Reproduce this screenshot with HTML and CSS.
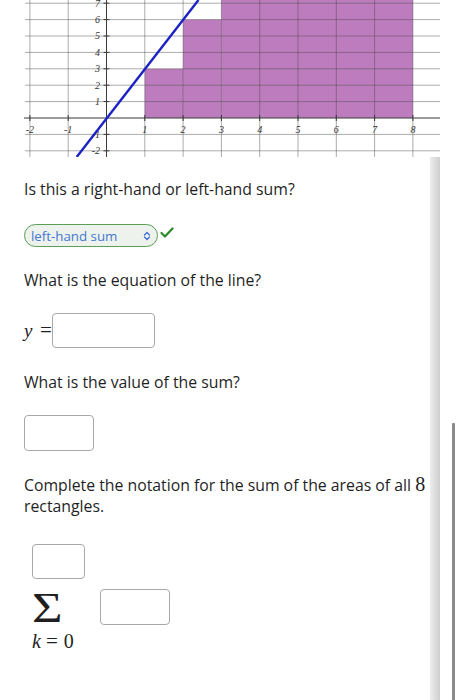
FILE: index.html
```html
<!DOCTYPE html>
<html>
<head>
<meta charset="utf-8">
<link rel="stylesheet" href="styles.css">
</head>
<body>
<div class="page">
  <div class="graph">
    <svg width="440" height="157" viewBox="0 0 440 157">
      <g class="rects">
        <rect x="144.8" y="68.8" width="38.3" height="49.2"/>
        <rect x="183.1" y="19.6" width="38.3" height="98.4"/>
        <rect x="221.4" y="0" width="191.5" height="118"/>
      </g>
      <g class="grid">
        <line x1="29.9" y1="0" x2="29.9" y2="157"/>
        <line x1="68.2" y1="0" x2="68.2" y2="157"/>
        <line x1="144.8" y1="0" x2="144.8" y2="157"/>
        <line x1="183.1" y1="0" x2="183.1" y2="157"/>
        <line x1="221.4" y1="0" x2="221.4" y2="157"/>
        <line x1="259.7" y1="0" x2="259.7" y2="157"/>
        <line x1="298" y1="0" x2="298" y2="157"/>
        <line x1="336.3" y1="0" x2="336.3" y2="157"/>
        <line x1="374.6" y1="0" x2="374.6" y2="157"/>
        <line x1="412.9" y1="0" x2="412.9" y2="157"/>
        <line x1="25" y1="3.2" x2="440" y2="3.2"/>
        <line x1="25" y1="19.6" x2="440" y2="19.6"/>
        <line x1="25" y1="36" x2="440" y2="36"/>
        <line x1="25" y1="52.4" x2="440" y2="52.4"/>
        <line x1="25" y1="68.8" x2="440" y2="68.8"/>
        <line x1="25" y1="85.2" x2="440" y2="85.2"/>
        <line x1="25" y1="101.6" x2="440" y2="101.6"/>
        <line x1="25" y1="134.4" x2="440" y2="134.4"/>
        <line x1="25" y1="150.8" x2="440" y2="150.8"/>
      </g>
      <g class="axes">
        <line x1="24" y1="118" x2="440" y2="118"/>
        <line x1="106.5" y1="0" x2="106.5" y2="157"/>
      </g>
      <g class="ticks">
        <line x1="29.9" y1="115" x2="29.9" y2="121"/>
        <line x1="68.2" y1="115" x2="68.2" y2="121"/>
        <line x1="144.8" y1="115" x2="144.8" y2="121"/>
        <line x1="183.1" y1="115" x2="183.1" y2="121"/>
        <line x1="221.4" y1="115" x2="221.4" y2="121"/>
        <line x1="259.7" y1="115" x2="259.7" y2="121"/>
        <line x1="298" y1="115" x2="298" y2="121"/>
        <line x1="336.3" y1="115" x2="336.3" y2="121"/>
        <line x1="374.6" y1="115" x2="374.6" y2="121"/>
        <line x1="412.9" y1="115" x2="412.9" y2="121"/>
        <line x1="103.5" y1="3.2" x2="109.5" y2="3.2"/>
        <line x1="103.5" y1="19.6" x2="109.5" y2="19.6"/>
        <line x1="103.5" y1="36" x2="109.5" y2="36"/>
        <line x1="103.5" y1="52.4" x2="109.5" y2="52.4"/>
        <line x1="103.5" y1="68.8" x2="109.5" y2="68.8"/>
        <line x1="103.5" y1="85.2" x2="109.5" y2="85.2"/>
        <line x1="103.5" y1="101.6" x2="109.5" y2="101.6"/>
        <line x1="103.5" y1="134.4" x2="109.5" y2="134.4"/>
        <line x1="103.5" y1="150.8" x2="109.5" y2="150.8"/>
      </g>
      <g class="xlab">
        <text x="29.9" y="133">-2</text>
        <text x="68.2" y="133">-1</text>
        <text x="144.8" y="133">1</text>
        <text x="183.1" y="133">2</text>
        <text x="221.4" y="133">3</text>
        <text x="259.7" y="133">4</text>
        <text x="298" y="133">5</text>
        <text x="336.3" y="133">6</text>
        <text x="374.6" y="133">7</text>
        <text x="412.9" y="133">8</text>
      </g>
      <g class="ylab">
        <text x="100" y="7">7</text>
        <text x="100" y="22.9">6</text>
        <text x="100" y="39.3">5</text>
        <text x="100" y="55.7">4</text>
        <text x="100" y="72.1">3</text>
        <text x="100" y="88.5">2</text>
        <text x="100" y="104.9">1</text>
        <text x="100" y="137.7">-1</text>
        <text x="100" y="154.1">-2</text>
      </g>
      <line class="fline" x1="76.7" y1="157" x2="198.5" y2="0"/>
    </svg>
  </div>
  <div class="lower">
    <div class="content">
      <p class="q q1">Is this a right-hand or left-hand sum?</p>
      <div class="answer-row">
        <div class="select">
          <span class="select-text">left-hand sum</span>
          <svg class="updown" width="8" height="10" viewBox="0 0 8 10">
            <path d="M1.5 4 L4 1.5 L6.5 4 M1.5 6 L4 8.5 L6.5 6" fill="none" stroke="#3b6fd0" stroke-width="1.3" stroke-linecap="round" stroke-linejoin="round"/>
          </svg>
        </div>
        <svg class="check" width="14" height="11" viewBox="0 0 14 11">
          <path d="M1.5 6 L5 9.5 L12.5 1.5" fill="none" stroke="#2b8a2b" stroke-width="2.2" stroke-linecap="round" stroke-linejoin="round"/>
        </svg>
      </div>
      <p class="q q2">What is the equation of the line?</p>
      <div class="eq-row">
        <span class="math mvar">y</span>
        <span class="math meq">=</span>
        <div class="box box-eq"></div>
      </div>
      <p class="q q3">What is the value of the sum?</p>
      <div class="box box-sum"></div>
      <p class="q q4">Complete the notation for the sum of the areas of all <span class="math num">8</span> rectangles.</p>
      <div class="sigma-block">
        <div class="sigma-col">
          <div class="box box-upper"></div>
          <span class="math sigma">&Sigma;</span>
          <span class="math lower-lim"><i class="kvar">k</i><span class="leq">=</span><span>0</span></span>
        </div>
        <div class="box box-term"></div>
      </div>
    </div>
    <div class="shadow"></div>
    <div class="track"><div class="thumb"></div></div>
  </div>
</div>
</body>
</html>
```

FILE: styles.css
```css
html, body {
  margin: 0;
  padding: 0;
  background: #ffffff;
}
.page {
  width: 461px;
  height: 700px;
  overflow: hidden;
  font-family: "Open Sans", "Noto Sans", sans-serif;
  color: #1f1f1f;
}
.graph {
  height: 157px;
}
.graph svg {
  display: block;
}
.rects rect {
  fill: #bd7cbe;
}
.grid line {
  stroke: rgba(70, 70, 70, 0.45);
  stroke-width: 1;
}
.axes line, .ticks line {
  stroke: #3a3a3a;
  stroke-width: 1;
}
.xlab text, .ylab text {
  font-family: "Liberation Serif", "DejaVu Serif", serif;
  font-style: italic;
  font-size: 10px;
  fill: #333;
}
.xlab text {
  text-anchor: middle;
}
.ylab text {
  text-anchor: end;
}
.fline {
  stroke: #1c22c4;
  stroke-width: 2.4;
}
.lower {
  display: flex;
  height: 543px;
}
.content {
  width: 406px;
  flex-shrink: 0;
  padding-left: 24px;
}
.shadow {
  width: 10px;
  flex-shrink: 0;
  background: linear-gradient(to right, #ececec, #cfcfcf);
}
.track {
  flex: 1;
  padding-top: 266px;
  padding-left: 12px;
}
.thumb {
  width: 3px;
  height: 300px;
  background: #8a8a8a;
  border-radius: 1px;
}
.q {
  margin: 0;
  font-size: 15.8px;
  line-height: 20px;
}
.q1 { margin-top: 22px; }
.answer-row {
  display: flex;
  align-items: flex-start;
  margin-top: 25px;
}
.select {
  height: 21px;
  border: 1.5px solid #5b9e56;
  border-radius: 12px;
  background: #eef2ed;
  display: flex;
  align-items: center;
  justify-content: space-between;
  padding: 0 6px 0 6px;
  box-sizing: content-box;
  width: 120px;
}
.select-text {
  font-size: 13.3px;
  color: #4478cf;
}
.updown {
  display: block;
}
.check {
  margin-left: 2px;
  margin-top: 3px;
}
.q2 { margin-top: 23px; }
.eq-row {
  display: flex;
  align-items: center;
  margin-top: 23px;
}
.math {
  font-family: "Liberation Serif", "DejaVu Serif", serif;
}
.mvar {
  font-style: italic;
  font-size: 19px;
  width: 15px;
}
.meq {
  font-size: 21px;
  margin-left: 1px;
}
.box {
  border: 1px solid #a8a8a8;
  border-radius: 4px;
  background: #fff;
  box-sizing: border-box;
}
.box-eq {
  width: 103px;
  height: 35px;
}
.q3 { margin-top: 24px; }
.box-sum {
  width: 70px;
  height: 36px;
  margin-top: 23px;
}
.q4 {
  margin-top: 23px;
  line-height: 21px;
}
.num {
  font-size: 20px;
}
.sigma-block {
  display: flex;
  align-items: flex-start;
  margin-top: 27px;
  padding-left: 8px;
}
.sigma-col {
  display: flex;
  flex-direction: column;
  align-items: flex-start;
}
.box-upper {
  width: 53px;
  height: 35px;
}
.sigma {
  font-size: 42px;
  line-height: 42px;
  margin-top: 8px;
  transform: scaleX(1.25);
  transform-origin: left center;
}
.lower-lim {
  font-size: 20px;
  line-height: 22px;
  margin-top: 1px;
  display: flex;
}
.kvar {
  font-style: italic;
}
.leq {
  margin: 0 6px 0 5px;
  font-size: 21px;
}
.box-term {
  width: 70px;
  height: 36px;
  margin-top: 45px;
  margin-left: 15px;
}
```
